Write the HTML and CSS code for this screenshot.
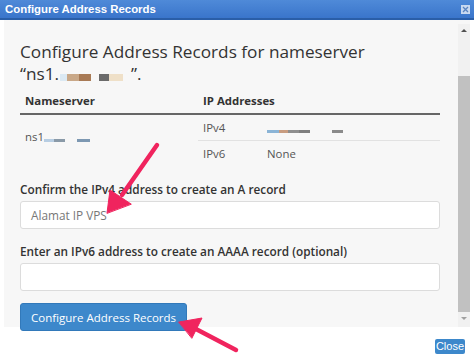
FILE: index.html
```html
<!DOCTYPE html>
<html>
<head>
<meta charset="utf-8">
<link rel="stylesheet" href="styles.css">
</head>
<body>
<div class="dialog">
  <div class="titlebar">
    <span class="title">Configure Address Records</span>
    <span class="xbtn"><svg width="9" height="9" viewBox="0 0 9 9"><rect x="0" y="0" width="9" height="9" fill="#c9d9f0"/><path d="M2 2L7 7M7 2L2 7" stroke="#5a84c0" stroke-width="1.3"/></svg></span>
  </div>
  <div class="body">
    <div class="panel">
      <div class="scroll">
        <h1 class="heading">Configure Address Records for nameserver<br>“ns1.<span class="blur"><i class="b1"></i><i class="b2"></i><i class="b3"></i><i class="gap"></i><i class="b4"></i><i class="b5"></i></span>”.</h1>
        <table class="ns">
          <colgroup><col class="col1"><col class="col2"><col></colgroup>
          <thead><tr><th>Nameserver</th><th colspan="2">IP Addresses</th></tr></thead>
          <tbody>
            <tr><td class="name" rowspan="2">ns1<span class="nsblur"><i class="n1"></i><i class="n2"></i><i class="ngap"></i><i class="n3"></i></span></td><td class="t">IPv4</td><td class="v"><span class="ipblur"><i class="p1"></i><i class="p2"></i><i class="p3"></i><i class="p4"></i><i class="pgap"></i><i class="p5"></i></span></td></tr>
            <tr><td class="t last">IPv6</td><td class="v last">None</td></tr>
          </tbody>
        </table>
        <label class="lbl first">Confirm the IPv4 address to create an A record</label>
        <div class="field"><span class="ph">Alamat IP VPS</span></div>
        <label class="lbl">Enter an IPv6 address to create an AAAA record (optional)</label>
        <div class="field"></div>
        <button class="primary">Configure Address Records</button>
      </div>
      <div class="scrollbar">
        <div class="arrow up"></div>
        <div class="track"><div class="thumb"></div></div>
        <div class="arrow down"></div>
      </div>
    </div>
    <div class="footer"><button class="close">Close</button></div>
  </div>
  <svg class="arrows" width="474" height="361" viewBox="0 0 474 361">
    <g fill="#f0245e" stroke="#f0245e" stroke-linecap="round">
      <path d="M157 145 L122 195" stroke-width="4.5"/>
      <path d="M107 213 L110 190 L131 204 Z" stroke-width="1"/>
      <path d="M236 350 L194 328" stroke-width="4.5"/>
      <path d="M179 322 L202 318 L192 338 Z" stroke-width="1"/>
    </g>
  </svg>
</div>
</body>
</html>
```

FILE: styles.css
```css
html, body {
  margin: 0;
  padding: 0;
  background: #fff;
}
.dialog {
  position: relative;
  width: 474px;
  height: 361px;
  overflow: hidden;
  font-family: "Open Sans", "Liberation Sans", sans-serif;
  color: #333;
}
.titlebar {
  height: 18px;
  background: linear-gradient(#4f8ad8, #3a75cb);
  border-bottom: 2px solid #2a5ea8;
  display: flex;
  align-items: center;
  justify-content: space-between;
  padding: 0 4px 0 5px;
}
.title {
  font-family: "Liberation Sans", Arial, sans-serif;
  font-weight: bold;
  font-size: 11.4px;
  color: #fff;
  line-height: 18px;
}
.xbtn { display: flex; }
.body {
  padding: 0 4px;
}
.panel {
  display: flex;
  height: 307px;
  background: #f7f7f7;
}
.scroll {
  flex: 1;
  padding: 21px 18px 0 16px;
}
.heading {
  margin: 0;
  font-weight: 400;
  font-size: 17.2px;
  line-height: 22px;
  color: #333;
}
.blur { display: inline-flex; align-items: center; height: 10px; vertical-align: -1px; margin-left: 1px; }
.blur i { display: inline-block; height: 7px; }
.blur .b1 { width: 7px; background: #dbe9f3; }
.blur .b2 { width: 12px; background: #c9a888; }
.blur .b3 { width: 12px; background: #a87a55; }
.blur .gap { width: 8px; }
.blur .b4 { width: 10px; background: #6b6b6b; }
.blur .b5 { width: 14px; background: #efe0c8; margin-right: 8px; }
.ns {
  border-collapse: collapse;
  table-layout: fixed;
  width: 420px;
  margin-top: 8px;
  font-size: 11.4px;
}
.ns .col1 { width: 178px; }
.ns .col2 { width: 64px; }
.ns th {
  text-align: left;
  font-weight: 700;
  padding: 0 5px 5px;
  height: 19px;
  box-sizing: border-box;
  border-bottom: 2px solid #666;
  vertical-align: bottom;
  line-height: 15px;
}
.ns td {
  padding: 0 5px;
  height: 25px;
  line-height: 15px;
  color: #555;
}
.ns td.t { border-bottom: 1px solid #e2e2e2; }
.ns td.v { border-bottom: 1px solid #e2e2e2; }
.ns td.last { border-bottom: none; }
.ns td.name { vertical-align: middle; padding-bottom: 8px; }
.nsblur, .ipblur { display: inline-flex; align-items: flex-end; height: 10px; vertical-align: -1px; }
.nsblur i, .ipblur i { display: inline-block; height: 3px; }
.nsblur .n1 { width: 10px; background: #b7cde2; }
.nsblur .n2 { width: 11px; background: #8a9aa8; }
.nsblur .ngap { width: 12px; }
.nsblur .n3 { width: 13px; background: #7d98b2; }
.ipblur .p1 { width: 12px; background: #8bb4d6; }
.ipblur .p2 { width: 9px; background: #c89c80; }
.ipblur .p3 { width: 11px; background: #8e8e8e; }
.ipblur .p4 { width: 11px; background: #7e7e7e; }
.ipblur .pgap { width: 22px; }
.ipblur .p5 { width: 11px; background: #8a8a8a; }
.lbl {
  display: block;
  font-size: 11.8px;
  font-weight: 600;
  color: #333;
  margin-top: 14px;
  line-height: 17px;
}
.lbl.first { margin-top: 15px; }
.field {
  box-sizing: border-box;
  width: 420px;
  height: 28px;
  margin-top: 3px;
  background: #fff;
  border: 1px solid #dcdcdc;
  border-radius: 3px;
  display: flex;
  align-items: center;
  padding-left: 10px;
  font-size: 11.8px;
}
.ph { color: #777; }
.primary {
  display: block;
  margin-top: 12px;
  height: 28px;
  padding: 0 10px;
  background: #3d88cb;
  border: 1px solid #3279ba;
  border-radius: 3px;
  color: #fff;
  font-family: "Open Sans", sans-serif;
  font-size: 11.5px;
}
.scrollbar {
  width: 12px;
  display: flex;
  flex-direction: column;
  background: #f1f1f1;
  margin-top: 4px;
}
.arrow { height: 14px; position: relative; }
.arrow.up::after, .arrow.down::after {
  content: "";
  position: absolute;
  left: 3px;
  border-left: 3px solid transparent;
  border-right: 3px solid transparent;
}
.arrow.up::after { top: 5px; border-bottom: 3px solid #505050; }
.arrow.down::after { top: 4px; border-top: 3px solid #a0a0a0; }
.track { flex: 1; display: flex; flex-direction: column; padding-top: 38px; }
.thumb { height: 236px; background: #c1c1c1; }
.footer {
  display: flex;
  justify-content: flex-end;
  padding: 12px 5px 0 0;
}
.close {
  height: 15px;
  padding: 0 1px;
  background: #3d88cb;
  border: none;
  border-radius: 2px;
  color: #fff;
  font-family: "Liberation Sans", Arial, sans-serif;
  font-size: 11px;
  line-height: 15px;
}
.arrows {
  position: absolute;
  left: 0;
  top: 0;
  pointer-events: none;
}
```
